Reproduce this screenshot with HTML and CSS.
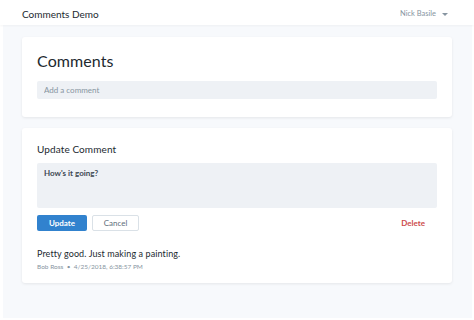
FILE: index.html
```html
<!DOCTYPE html>
<html lang="en">
<head>
    <meta charset="UTF-8">
    <title>Comments Demo</title>
    <link rel="stylesheet" href="styles.css">
</head>
<body>
    <nav class="navbar">
        <span class="brand">Comments Demo</span>
        <span class="user">Nick Basile <span class="caret"></span></span>
    </nav>

    <main class="main">
        <div class="card">
            <h1>Comments</h1>
            <input type="text" class="field" placeholder="Add a comment">
        </div>

        <div class="card card-edit">
            <h2>Update Comment</h2>
            <textarea class="field area">How's it going?</textarea>
            <div class="actions">
                <button class="btn btn-primary">Update</button>
                <button class="btn btn-outline">Cancel</button>
                <button class="btn-link">Delete</button>
            </div>
            <p class="comment-body">Pretty good. Just making a painting.</p>
            <p class="comment-meta">Bob Ross &nbsp;&bull;&nbsp; 4/25/2018, 6:38:57 PM</p>
        </div>
    </main>
</body>
</html>
```

FILE: styles.css
```css
body {
    margin: 0;
    font-family: Lato, "Open Sans", sans-serif;
    background: #fff;
    color: #22292f;
}

.navbar {
    height: 25px;
    display: flex;
    align-items: center;
    justify-content: space-between;
    padding: 0 26px 0 22px;
    box-shadow: 0 1px 2px rgba(0, 0, 0, 0.04);
    position: relative;
}

.brand {
    font-size: 10px;
    color: #22292f;
    margin-top: 2px;
}

.user {
    font-size: 7.5px;
    color: #8795a1;
    margin-top: 2px;
}

.caret {
    display: inline-block;
    margin-left: 4px;
    border-left: 3px solid transparent;
    border-right: 3px solid transparent;
    border-top: 3px solid #8795a1;
    vertical-align: middle;
}

.main {
    margin: 0 2px 2px 3px;
    background: #f7f9fc;
    padding: 12px 20px 35px 19px;
    display: flex;
    flex-direction: column;
    gap: 11px;
}

.card {
    background: #fff;
    border-radius: 3px;
    box-shadow: 0 1px 3px rgba(0, 0, 0, 0.08);
    padding: 13px 15px 18px;
}

h1 {
    margin: 0 0 10px;
    font-size: 16px;
    font-weight: 400;
    line-height: 21px;
    letter-spacing: 0.1px;
}

h2 {
    margin: 0 0 7px;
    font-size: 10px;
    font-weight: 400;
    line-height: 14px;
    letter-spacing: 0.1px;
}

.card-edit {
    padding-top: 14px;
    padding-bottom: 13px;
}

.field {
    display: block;
    box-sizing: border-box;
    width: 100%;
    border: none;
    border-radius: 2px;
    background: #eef1f5;
    font-family: inherit;
    font-size: 8px;
    color: #22292f;
    padding: 0 7px;
    height: 18px;
    outline: none;
}

.field::placeholder {
    color: #8795a1;
}

.area {
    height: 45px;
    padding: 5px 7px;
    resize: none;
    font-weight: 700;
    color: #3d4852;
}

.actions {
    display: flex;
    align-items: center;
    gap: 5px;
    margin-top: 7px;
}

.btn {
    height: 16px;
    padding: 0;
    font-family: inherit;
    font-size: 8px;
    border-radius: 2px;
    cursor: pointer;
}

.btn-primary {
    width: 50px;
    background: #3182ce;
    border: none;
    color: #fff;
    font-weight: 700;
}

.btn-outline {
    width: 47px;
    background: #fff;
    border: 1px solid #dae1e7;
    color: #606f7b;
}

.btn-link {
    margin-left: auto;
    margin-right: 12px;
    background: none;
    border: none;
    padding: 0;
    font-family: inherit;
    font-size: 8px;
    font-weight: 700;
    color: #cc4b4b;
    cursor: pointer;
}

.comment-body {
    margin: 17px 0 0;
    font-size: 9px;
    line-height: 12px;
    letter-spacing: 0.1px;
    color: #22292f;
}

.comment-meta {
    margin: 3px 0 0;
    font-size: 6.5px;
    color: #8795a1;
}
```
